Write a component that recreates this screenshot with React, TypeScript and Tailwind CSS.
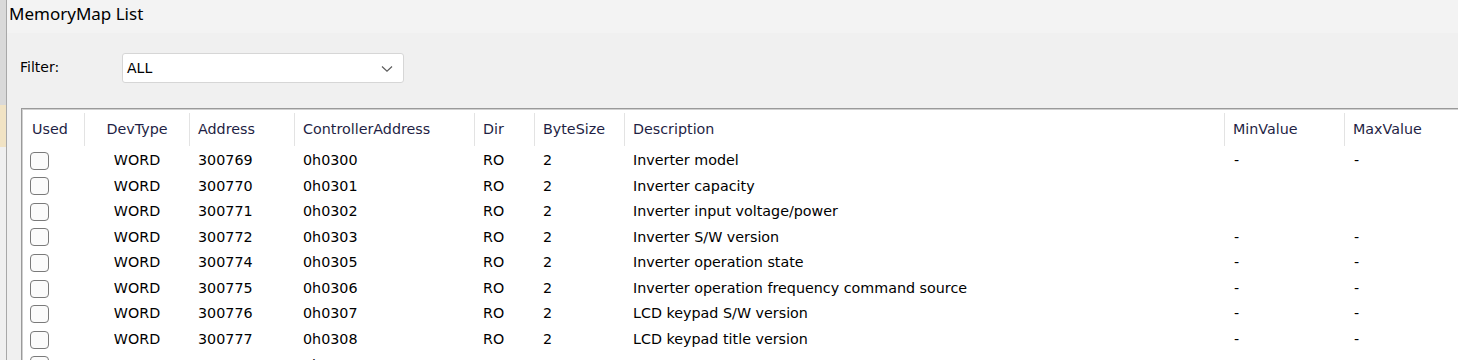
import React from "react";

const rows = [
  { addr: "300769", ctrl: "0h0300", desc: "Inverter model", min: "-", max: "-" },
  { addr: "300770", ctrl: "0h0301", desc: "Inverter capacity", min: "", max: "" },
  { addr: "300771", ctrl: "0h0302", desc: "Inverter input voltage/power", min: "", max: "" },
  { addr: "300772", ctrl: "0h0303", desc: "Inverter S/W version", min: "-", max: "-" },
  { addr: "300774", ctrl: "0h0305", desc: "Inverter operation state", min: "-", max: "-" },
  { addr: "300775", ctrl: "0h0306", desc: "Inverter operation frequency command source", min: "-", max: "-" },
  { addr: "300776", ctrl: "0h0307", desc: "LCD keypad S/W version", min: "-", max: "-" },
  { addr: "300777", ctrl: "0h0308", desc: "LCD keypad title version", min: "-", max: "-" },
  { addr: "300785", ctrl: "0h0310", desc: "Output current", min: "-", max: "-" },
];

const grid =
  "grid grid-cols-[61px_105px_105px_180px_60px_90px_600px_120px_1fr]";

function Checkbox() {
  return (
    <div className="w-[19px] h-[18px] rounded-[4px] border border-[#7a7a7a] bg-[#fbfbfb]" />
  );
}

export default function App() {
  const head = ["DevType", "Address", "ControllerAddress", "Dir", "ByteSize", "Description", "MinValue", "MaxValue"];
  return (
    <div
      className="w-[1458px] h-[360px] overflow-hidden bg-[#f0f0f0] flex"
      style={{ fontFamily: '"DejaVu Sans", Verdana, sans-serif' }}
    >
      {/* background window strip */}
      <div className="w-[7px] h-full bg-[#e6e6e6] border-r border-[#a8a8a8] flex flex-col overflow-hidden shrink-0">
        <div className="h-[105px] shrink-0 bg-[#d9d9d9]" />
        <div className="h-[42px] shrink-0 bg-[#f1e3c4]" />
        <div className="h-[213px] shrink-0 bg-[#f0f0f0]" />
      </div>

      {/* main window */}
      <div className="flex-1 flex flex-col min-w-0">
        <div
          className="h-[33px] shrink-0 bg-[#f3f3f3] flex items-center pl-[2px] pb-[5px] text-[17px] text-black"
          style={{ fontFamily: '"Noto Sans", "Open Sans", sans-serif' }}
        >
          MemoryMap List
        </div>
        <div className="flex items-center shrink-0 pt-[20px] pl-[13px]">
          <span className="w-[102px] text-[14px] text-black -mt-[2px]">Filter:</span>
          <div className="w-[282px] h-[30px] bg-white border border-[#d6d6d6] rounded-[3px] flex items-center pl-[4px] pr-[10px] justify-between">
            <span className="text-[14px] text-black">ALL</span>
            <svg width="12" height="8" viewBox="0 0 12 8" className="mt-[1px]">
              <path d="M1 1.5 L6 6.2 L11 1.5" fill="none" stroke="#5c5c5c" strokeWidth="1.2" />
            </svg>
          </div>
        </div>

        <div className="mt-[25px] ml-[14px] flex-1 min-h-0 overflow-hidden bg-white border-l border-t border-[#9a9a9a]">
          <div className="h-full border-l border-t border-[#d0d0d0]">
            <div className={`${grid} h-[38px] pt-[1px] text-[14.3px] text-[#1f1f45]`}>
              <div className="flex items-center pl-[9px]">Used</div>
              {head.map((h, i) => (
                <div
                  key={h}
                  className={`my-[2px] border-l border-[#e3e3e3] flex items-center whitespace-nowrap ${
                    i === 0 ? "justify-center" : "pl-[8px]"
                  }`}
                >
                  {h}
                </div>
              ))}
            </div>
            {rows.map((r) => (
              <div key={r.addr} className={`${grid} h-[25.57px] text-[14.3px] text-black`}>
                <div className="flex items-center pl-[7px]">
                  <Checkbox />
                </div>
                <div className="flex items-center justify-center pl-[1px]">WORD</div>
                <div className="flex items-center pl-[9px]">{r.addr}</div>
                <div className="flex items-center pl-[9px]">{r.ctrl}</div>
                <div className="flex items-center pl-[9px]">RO</div>
                <div className="flex items-center pl-[9px]">2</div>
                <div className="flex items-center pl-[9px] whitespace-nowrap">{r.desc}</div>
                <div className="flex items-center pl-[10px]">{r.min}</div>
                <div className="flex items-center pl-[10px]">{r.max}</div>
              </div>
            ))}
          </div>
        </div>
      </div>
    </div>
  );
}
